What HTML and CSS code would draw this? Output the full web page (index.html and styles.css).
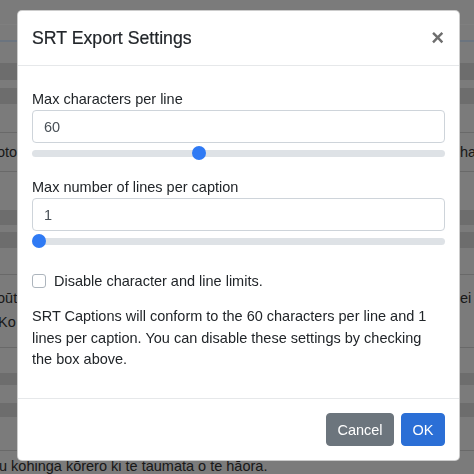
FILE: index.html
```html
<!DOCTYPE html>
<html lang="en">
<head>
<meta charset="utf-8">
<title>SRT Export Settings</title>
<link rel="stylesheet" href="styles.css">
</head>
<body>
<div class="page">
  <div class="toolbar"></div>
  <div class="rule rule-light"></div>
  <div class="gap-15"></div>
  <div class="rule-blue"></div>

  <div class="wave wave-a">
    <div class="band band-a1"></div>
    <div class="band band-a2"></div>
  </div>
  <div class="rule"></div>
  <div class="text-row single">
    <div class="line-pair">
      <span class="frag-left">oto</span>
      <span class="frag-right">ha</span>
    </div>
  </div>
  <div class="rule"></div>

  <div class="wave wave-b">
    <div class="band band-b1"></div>
    <div class="band band-b2"></div>
  </div>
  <div class="rule"></div>
  <div class="text-row double">
    <div class="line-pair">
      <span class="frag-left">oūt</span>
      <span class="frag-right">ei</span>
    </div>
    <div class="line-pair">
      <span class="frag-left frag-ko">Ko</span>
    </div>
  </div>
  <div class="rule"></div>

  <div class="wave wave-c">
    <div class="band band-c1"></div>
    <div class="band band-c2"></div>
  </div>
  <div class="rule"></div>
  <div class="text-row last">
    <span class="bottom-text">u kohinga kōrero ki te taumata o te hāora.</span>
  </div>
</div>

<div class="backdrop">
  <div class="modal" role="dialog" aria-labelledby="modal-title">
    <div class="modal-header">
      <h5 class="modal-title" id="modal-title">SRT Export Settings</h5>
      <button class="close" type="button" aria-label="Close">×</button>
    </div>
    <div class="modal-body">
      <div class="form-group">
        <label class="field-label" for="max-chars">Max characters per line</label>
        <input class="form-control" id="max-chars" type="text" value="60">
        <input class="range" type="range" min="0" max="150" value="60" aria-label="Max characters per line">
      </div>
      <div class="form-group">
        <label class="field-label" for="max-lines">Max number of lines per caption</label>
        <input class="form-control" id="max-lines" type="text" value="1">
        <input class="range" type="range" min="1" max="10" value="1" aria-label="Max number of lines per caption">
      </div>
      <label class="check-row">
        <input class="check" type="checkbox">
        <span>Disable character and line limits.</span>
      </label>
      <p class="note">SRT Captions will conform to the 60 characters per line and 1 lines per caption. You can disable these settings by checking the box above.</p>
    </div>
    <div class="modal-footer">
      <button class="btn btn-secondary" type="button">Cancel</button>
      <button class="btn btn-primary" type="button">OK</button>
    </div>
  </div>
</div>
</body>
</html>
```

FILE: styles.css
```css
* {
  box-sizing: border-box;
}

html, body {
  margin: 0;
  padding: 0;
  width: 474px;
  height: 474px;
  overflow: hidden;
}

body {
  font-family: "Liberation Sans", Arial, sans-serif;
  background: #f6f6f6;
  color: #333;
}

/* ---------- background page (dimmed by the backdrop) ---------- */
.page {
  width: 474px;
  height: 474px;
  overflow: hidden;
  background: #f6f6f6;
  font-size: 14.5px;
}

.toolbar {
  height: 24px;
}

.rule {
  height: 1px;
  background: #d2d2d2;
}

.rule-light {
  background: #ffffff;
}

.gap-15 {
  height: 15px;
}

.rule-blue {
  height: 2px;
  background: #d6e8ff;
}

.wave {
  display: flex;
  flex-direction: column;
}

.band {
  background: #dadada;
}

.wave-a {
  height: 90px;
  padding-top: 21px;
}
.band-a1 { height: 17px; }
.band-a2 { height: 16px; margin-top: 8px; }

.wave-b {
  height: 102px;
  padding-top: 38px;
}
.band-b1 { height: 15px; }
.band-b2 { height: 16px; margin-top: 7px; }

.wave-c {
  height: 102px;
  padding-top: 25px;
}
.band-c1 { height: 12px; }
.band-c2 { height: 14px; margin-top: 18px; }

.text-row {
  color: #333;
}

.text-row.single {
  height: 38px;
  padding-top: 7px;
}

.text-row.double {
  height: 72px;
  padding-top: 11px;
}

.line-pair {
  display: flex;
  height: 24px;
  line-height: 24px;
  white-space: nowrap;
}

.frag-left {
  margin-left: -3px;
}

.frag-ko {
  margin-left: -2px;
}

.frag-right {
  margin-left: auto;
  width: 14px;
}

.text-row.last {
  padding-top: 3px;
  line-height: 24px;
  white-space: nowrap;
}

.bottom-text {
  display: inline-block;
  margin-left: -1px;
}

/* ---------- backdrop + modal ---------- */
.backdrop {
  position: fixed;
  inset: 0;
  background: rgba(0, 0, 0, 0.5);
}

.modal {
  width: 443px;
  margin: 10px 0 0 17px;
  background: #fff;
  border: 1px solid rgba(0, 0, 0, 0.2);
  border-radius: 5px;
  color: #212529;
  font-size: 14.5px;
}

.modal-header {
  display: flex;
  align-items: center;
  justify-content: space-between;
  padding: 14px;
  border-bottom: 1px solid #e6e8ea;
}

.modal-title {
  margin: 0;
  font-size: 17.7px;
  font-weight: normal;
  line-height: 26px;
  color: #212529;
  -webkit-text-stroke: 0.2px #212529;
}

.close {
  padding: 0;
  margin: 0 1px 0 0;
  border: 0;
  background: transparent;
  font-family: "Liberation Sans", Arial, sans-serif;
  font-size: 22px;
  font-weight: bold;
  line-height: 1;
  color: #6e6e6e;
}

.modal-body {
  padding: 22px 14px 27px;
}

.form-group {
  margin-bottom: 16px;
}

.field-label {
  display: block;
  line-height: 22px;
}

.form-control {
  display: block;
  width: 100%;
  height: 33px;
  margin: 0;
  padding: 0 11px;
  border: 1px solid #ced4da;
  border-radius: 4px;
  font-family: inherit;
  font-size: 14.5px;
  color: #495057;
  background: #fff;
}

.range {
  -webkit-appearance: none;
  appearance: none;
  display: block;
  width: 100%;
  height: 14px;
  margin: 3px 0 0;
  padding: 0;
  background: transparent;
}

.range::-webkit-slider-runnable-track {
  height: 7px;
  border-radius: 7px;
  background: #dee2e6;
}

.range::-webkit-slider-thumb {
  -webkit-appearance: none;
  appearance: none;
  width: 14px;
  height: 14px;
  margin-top: -3.5px;
  border: 0;
  border-radius: 50%;
  background: #2f7af4;
}

.check-row {
  display: flex;
  align-items: center;
  gap: 8px;
  margin-top: 22px;
  line-height: 22px;
}

.check {
  -webkit-appearance: none;
  appearance: none;
  width: 14px;
  height: 14px;
  margin: 0;
  border: 1px solid #adb5bd;
  border-radius: 3px;
  background: #fff;
}

.note {
  margin: 14px 0 0;
  line-height: 21.7px;
}

.modal-footer {
  display: flex;
  justify-content: flex-end;
  gap: 7px;
  padding: 14px;
  border-top: 1px solid #e6e8ea;
}

.btn {
  height: 33px;
  padding: 0 10.5px;
  border: 1px solid transparent;
  border-radius: 4px;
  font-family: inherit;
  font-size: 14.5px;
  color: #fff;
}

.btn-secondary {
  background: #6c757d;
  border-color: #6c757d;
}

.btn-primary {
  background: #2b6fd6;
  border-color: #2b6fd6;
}
```
